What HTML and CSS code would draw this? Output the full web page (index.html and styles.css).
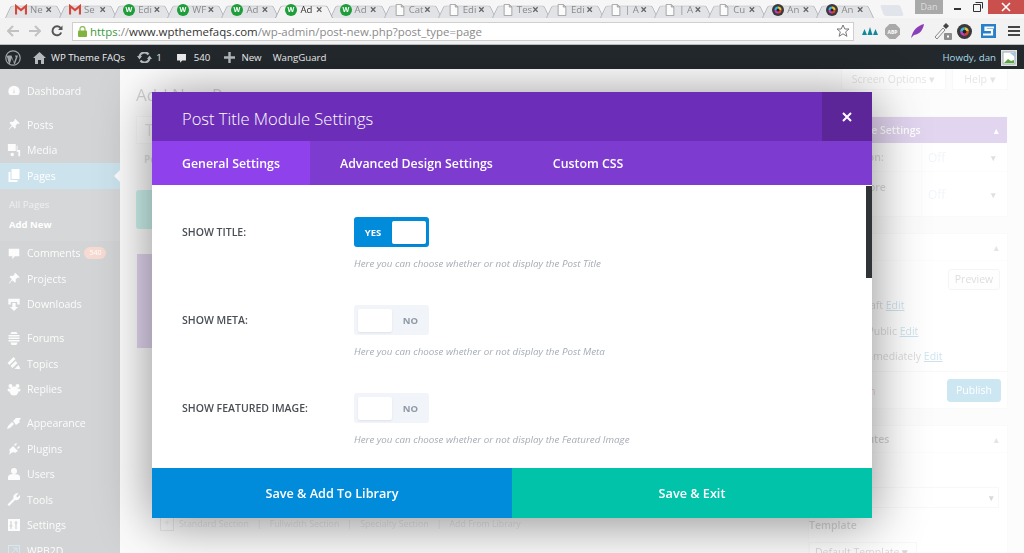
FILE: index.html
```html
<!DOCTYPE html>
<html lang="en">
<head>
<meta charset="utf-8">
<title>Add New Page</title>
<link rel="stylesheet" href="styles.css">
</head>
<body>
<svg class="defs" width="0" height="0" aria-hidden="true">
  <symbol id="gm" viewBox="0 0 12 12"><path d="M1 10.500V2l5 4 5-4v8.500" fill="none" stroke="#d5483b" stroke-width="2.200"/></symbol>
  <symbol id="wp" viewBox="0 0 12 12"><circle cx="6" cy="6" r="6" fill="#1e9e3a"/><text x="6" y="8" text-anchor="middle" class="wptxt">W</text></symbol>
  <symbol id="doc" viewBox="0 0 12 14"><path d="M1.500.5h6l3 3v10h-9z M7.500.5v3h3" fill="#fbfbfb" stroke="#9a9a9a"/></symbol>
  <symbol id="wheel" viewBox="0 0 12 12"><circle cx="6" cy="6" r="6" fill="#3a3a3e"/><path d="M6 2.500A3.500 3.500 0 0 1 9.500 6H6z" fill="#e9c23c"/><path d="M9.500 6A3.500 3.500 0 0 1 6 9.500V6z" fill="#d8452e"/><path d="M6 9.500A3.500 3.500 0 0 1 2.500 6H6z" fill="#c23cc0"/><path d="M2.500 6A3.500 3.500 0 0 1 6 2.500V6z" fill="#39b7d8"/><circle cx="6" cy="6" r="1.500" fill="#222"/></symbol>
  <symbol id="pin" viewBox="0 0 16 16"><path d="M9.500 1l5.500 5.500-1.500.8-1-.5-2.500 2.500.3 2.700-1.300 1.300-3-3L2 14.500l-.5-.5L5.300 9 2.500 6l1.300-1.300 2.700.3L9 2.500 8.600 1.600z" fill="#eee"/></symbol>
  <symbol id="bubble" viewBox="0 0 16 16"><path d="M1.500 2h13v9.500H9L6 15v-3.500H1.500z" fill="#eee"/></symbol>
</svg>

<div class="tabstrip">
  <div class="tab"><svg class="fav"><use href="#gm"/></svg><span class="tl">Ne</span><span class="tx">×</span></div>
  <div class="tab"><svg class="fav"><use href="#gm"/></svg><span class="tl">Se</span><span class="tx">×</span></div>
  <div class="tab"><svg class="fav"><use href="#wp"/></svg><span class="tl">Edi</span><span class="tx">×</span></div>
  <div class="tab"><svg class="fav"><use href="#wp"/></svg><span class="tl">WF</span><span class="tx">×</span></div>
  <div class="tab"><svg class="fav"><use href="#wp"/></svg><span class="tl">Ad</span><span class="tx">×</span></div>
  <div class="tab active"><svg class="fav"><use href="#wp"/></svg><span class="tl">Ad</span><span class="tx">×</span></div>
  <div class="tab"><svg class="fav"><use href="#wp"/></svg><span class="tl">Ad</span><span class="tx">×</span></div>
  <div class="tab"><svg class="fav"><use href="#doc"/></svg><span class="tl">Cat</span><span class="tx">×</span></div>
  <div class="tab"><svg class="fav"><use href="#doc"/></svg><span class="tl">Edi</span><span class="tx">×</span></div>
  <div class="tab"><svg class="fav"><use href="#doc"/></svg><span class="tl">Tes</span><span class="tx">×</span></div>
  <div class="tab"><svg class="fav"><use href="#doc"/></svg><span class="tl">Edi</span><span class="tx">×</span></div>
  <div class="tab"><svg class="fav"><use href="#doc"/></svg><span class="tl">| A</span><span class="tx">×</span></div>
  <div class="tab"><svg class="fav"><use href="#doc"/></svg><span class="tl">| A</span><span class="tx">×</span></div>
  <div class="tab"><svg class="fav"><use href="#doc"/></svg><span class="tl">Cu</span><span class="tx">×</span></div>
  <div class="tab"><svg class="fav"><use href="#wheel"/></svg><span class="tl">An</span><span class="tx">×</span></div>
  <div class="tab"><svg class="fav"><use href="#wheel"/></svg><span class="tl">An</span><span class="tx">×</span></div>
  <div class="newtab"></div>
  <div class="winbtns">
    <span class="profile">Dan</span>
    <span class="wb"><svg width="10" height="10" viewBox="0 0 10 10"><path d="M1 6h7v2H1z" fill="#333"/></svg></span>
    <span class="wb"><svg width="10" height="10" viewBox="0 0 10 10"><path d="M2.500.5h7v6M.5 2.500h7v7h-7z" fill="none" stroke="#333"/></svg></span>
    <span class="wb wclose"><svg width="10" height="10" viewBox="0 0 10 10"><path d="M1 1l8 8M9 1l-8 8" stroke="#fff" stroke-width="1.600"/></svg></span>
  </div>
</div>

<div class="toolbar">
  <svg class="navi" width="12" height="12" viewBox="0 0 12 12"><path d="M6 1L1 6l5 5M1 6h11" fill="none" stroke="#c2c2c2" stroke-width="2"/></svg>
  <svg class="navi" width="12" height="12" viewBox="0 0 12 12"><path d="M6 1l5 5-5 5M11 6H0" fill="none" stroke="#c2c2c2" stroke-width="2"/></svg>
  <svg class="navi" width="12" height="12" viewBox="0 0 12 12"><path d="M10.200 7.500A4.500 4.500 0 1 1 9.500 3" fill="none" stroke="#555" stroke-width="2"/><path d="M11.500 .5v4.500H7z" fill="#555"/></svg>
  <div class="omnibox">
    <svg class="lock" width="9" height="11" viewBox="0 0 9 11"><path d="M2 5V3a2.500 2.500 0 0 1 5 0v2" fill="none" stroke="#8fbf5a" stroke-width="1.300"/><rect y="4.500" width="9" height="6.500" rx="1" fill="#7fb53f"/></svg>
    <span class="url"><span class="u-g">https</span><span class="u-l">://</span><span class="u-d">www.wpthemefaqs.com</span><span class="u-l">/wp-admin/post-new.php?post_type=page</span></span>
    <svg class="star" width="14" height="14" viewBox="0 0 14 14"><path d="M7 1l1.800 4h4.200l-3.300 2.800 1.200 4.500L7 9.800l-3.900 2.500 1.200-4.500L1 5h4.200z" fill="#fff" stroke="#777"/></svg>
  </div>
  <div class="exts">
    <svg width="16" height="10" viewBox="0 0 16 10"><path d="M0 9l2.500-6L5 9zM5.500 9L8 1l2.500 8zM11 9l2.500-6L16 9z" fill="#12899a"/></svg>
    <svg width="15" height="15" viewBox="0 0 15 15"><path d="M4.500 0h6L15 4.500v6L10.500 15h-6L0 10.500v-6z" fill="#a9a9a9"/><text x="7.500" y="10" text-anchor="middle" class="abp">ABP</text></svg>
    <svg width="13" height="14" viewBox="0 0 13 14"><path d="M0 14C2 6 6 2 13 0c-1 6-4 10-10 11z" fill="#8a3fb8"/></svg>
    <svg width="18" height="18" viewBox="0 0 18 18"><path d="M1 15l8-9 2 2-8 9z" fill="#f4f4f4" stroke="#888"/><path d="M9 4l3-3 3 3-3 3z" fill="#444"/><rect x="10" y="11" width="8" height="7" rx="1" fill="#8d8d8d"/><rect x="13" y="13.500" width="2" height="2" fill="#fff"/></svg>
    <svg width="15" height="15"><use href="#wheel"/></svg>
    <svg width="15" height="14" viewBox="0 0 15 14"><rect width="15" height="14" fill="#2a80c8"/><path d="M13 3.500H4.500v2.500H11v4.500H2" fill="none" stroke="#fff" stroke-width="2.200"/></svg>
    <svg width="12" height="10" viewBox="0 0 12 10"><path d="M0 0h12v2H0zM0 4h12v2H0zM0 8h12v2H0z" fill="#444"/></svg>
  </div>
</div>

<header class="adminbar">
  <svg class="wplogo" width="16" height="16" viewBox="0 0 16 16"><circle cx="8" cy="8" r="7.200" fill="none" stroke="#a0a5aa" stroke-width="1.200"/><path d="M3 5.500h3.500L9 12.500l1.800-5L10 5.500h3L10 14h-.8L6.800 8l-2 6H4L1.800 6z" fill="#a0a5aa"/></svg>
  <svg class="abi" width="13" height="12" viewBox="0 0 13 12"><path d="M6.500 0L13 6h-2v6H8V8H5v4H2V6H0z" fill="#b4b9be"/></svg>
  <span class="abt sitename">WP Theme FAQs</span>
  <svg class="abi upd" width="15" height="11" viewBox="0 0 15 11"><path d="M2.500 5.500a5 5 0 0 1 9-3M12.500 5.500a5 5 0 0 1-9 3" fill="none" stroke="#b4b9be" stroke-width="2.200"/><path d="M0 4h5L2.500 7.500zM10 7h5l-2.500-3.500z" fill="#b4b9be"/></svg>
  <span class="abt one">1</span>
  <svg class="abi cmt" width="11" height="12"><use href="#bubble"/></svg>
  <span class="abt c540">540</span>
  <svg class="abi plus" width="11" height="11" viewBox="0 0 11 11"><path d="M4.300 0h2.400v4.300H11v2.400H6.700V11H4.300V6.700H0V4.300h4.300z" fill="#b4b9be"/></svg>
  <span class="abt new">New</span>
  <span class="abt wang">WangGuard</span>
  <span class="abt howdy">Howdy, dan</span>
  <svg class="avatar" width="16" height="16" viewBox="0 0 16 16"><rect width="16" height="16" fill="#dfe3e6"/><rect x="2" y="2" width="12" height="12" fill="#fff" stroke="#9aa"/><path d="M3 13l4-4 3 2 3-1v3z" fill="#5aa83c"/><path d="M9 3h5v4z" fill="#9cc7e6"/></svg>
</header>

<div class="workspace">
  <nav class="sidebar">
    <div class="mi"><svg width="13" height="13" viewBox="0 0 16 16"><path d="M8 2a7 7 0 0 0-7 7c0 2 .8 3.500 2 4.500h10c1.200-1 2-2.500 2-4.500a7 7 0 0 0-7-7zm-.8 9l.8-6 .8 6a1 1 0 0 1-1.600 0z" fill="#eee"/></svg><span>Dashboard</span></div>
    <div class="gap"></div>
    <div class="mi"><svg width="13" height="13"><use href="#pin"/></svg><span>Posts</span></div>
    <div class="mi"><svg width="14" height="14" viewBox="0 0 16 16"><path d="M1 1h9v8H1z M11 3h1v5h3v7h-2v-5h-2z" fill="#eee"/><circle cx="6" cy="13" r="2" fill="#eee"/></svg><span>Media</span></div>
    <div class="mi cur"><svg width="11" height="13" viewBox="0 0 11 13"><path d="M3 0h8v10H3z M0 3h2v8h7v2H0z" fill="#fff"/></svg><span>Pages</span></div>
    <div class="submenu">
      <div class="si">All Pages</div>
      <div class="si strong">Add New</div>
    </div>
    <div class="mi"><svg width="13" height="13"><use href="#bubble"/></svg><span>Comments</span><em class="badge">540</em></div>
    <div class="mi"><svg width="13" height="13"><use href="#pin"/></svg><span>Projects</span></div>
    <div class="mi"><svg width="13" height="13" viewBox="0 0 16 16"><path d="M1 1h14v7h-3V5H4v3H1z M6 6h4v5h3l-5 5-5-5h3z" fill="#eee"/></svg><span>Downloads</span></div>
    <div class="gap"></div>
    <div class="mi"><svg width="11" height="13" viewBox="0 0 11 13"><path d="M3 0h5l1 2H2zM0 3h11v1.500H0zM0 5.500h11V7H0zM0 8h11v1.500H0zM2 10.500h7L8 13H3z" fill="#eee"/></svg><span>Forums</span></div>
    <div class="mi"><svg width="13" height="13" viewBox="0 0 13 13"><path d="M0 6l6-6 2 2-6 6zM3 9l5-5 2 2-5 5zM7 12l4-4 2 4z" fill="#eee"/></svg><span>Topics</span></div>
    <div class="mi"><svg width="13" height="13" viewBox="0 0 13 13"><circle cx="6.500" cy="8" r="4.500" fill="#eee"/><circle cx="3" cy="3" r="2" fill="#eee"/><circle cx="10" cy="3" r="2" fill="#eee"/><circle cx="1.500" cy="7" r="1.500" fill="#eee"/><circle cx="11.500" cy="7" r="1.500" fill="#eee"/></svg><span>Replies</span></div>
    <div class="gap"></div>
    <div class="mi"><svg width="14" height="13" viewBox="0 0 14 13"><path d="M0 12l1-3 4-4 2 2-4 4zM6 4l3-3 5 0-2 3 1 1-4 3z" fill="#eee"/></svg><span>Appearance</span></div>
    <div class="mi"><svg width="12" height="12" viewBox="0 0 12 12"><path d="M1 12l1-4-1-1 3-3 1-1 5 5-3 2-1-1-3 1z M6 2l2-2 1 1-2 2zM9 5l2-2 1 1-2 2z" fill="#eee"/></svg><span>Plugins</span></div>
    <div class="mi"><svg width="12" height="12" viewBox="0 0 12 12"><circle cx="6" cy="3" r="3" fill="#eee"/><path d="M0 12V9c0-2 2-3 6-3s6 1 6 3v3z" fill="#eee"/></svg><span>Users</span></div>
    <div class="mi"><svg width="13" height="13" viewBox="0 0 13 13"><path d="M0 11.500L6 5.500a4 4 0 0 1 5-5L8.500 3 10 4.500 12.500 2a4 4 0 0 1-5 5L1.500 13z" fill="#eee"/></svg><span>Tools</span></div>
    <div class="mi"><svg width="12" height="12" viewBox="0 0 12 12"><path d="M0 0h12v12H0z" fill="#eee"/><path d="M3 2v8M8 2v8M1.500 7h3M6.500 4h3" stroke="#23282d" stroke-width="1.200"/></svg><span>Settings</span></div>
    <div class="mi"><svg width="12" height="12" viewBox="0 0 12 12"><rect x=".5" y=".5" width="11" height="11" fill="none" stroke="#3a8db5"/><path d="M3 9l5-5M5 3h4v4" fill="none" stroke="#3a8db5"/></svg><span>WPB2D</span></div>
  </nav>

  <main class="content">
    <div class="leftcol">
      <h1 class="pagetitle">Add New Page</h1>
      <div class="titleinput">Title</div>
      <div class="permalink">Permalink:</div>
      <div class="buildbtn">Use Default Editor</div>
      <div class="builderbox"></div>
      <div class="sections">
        <span class="plusbox">+</span>
        <span>Standard Section</span><i>|</i><span>Fullwidth Section</span><i>|</i><span>Specialty Section</span><i>|</i><span>Add From Library</span>
      </div>
    </div>
    <aside class="rightcol">
      <div class="screenmeta"><span class="smtab">Screen Options ▾</span><span class="smtab">Help ▾</span></div>
      <section class="box pagebox">
        <div class="boxhead purple"><span>Divi Page Settings</span><b>▴</b></div>
        <div class="setrow first"><span>Navigation:</span><span class="off">Off</span><b>▾</b></div>
        <div class="setrow second"><span>Hide Before<br>Scroll:</span><span class="off">Off</span><b>▾</b></div>
      </section>
      <section class="box pubbox">
        <div class="boxhead"><span>Publish</span><b>▴</b></div>
        <div class="prevrow"><span class="btn">Preview</span></div>
        <div class="pubrow">Status: Draft <a>Edit</a></div>
        <div class="pubrow">Visibility: Public <a>Edit</a></div>
        <div class="pubrow">Publish immediately <a>Edit</a></div>
        <div class="pubfoot"><span class="trash">Move to Trash</span><span class="btn primary">Publish</span></div>
      </section>
      <section class="box attrbox">
        <div class="boxhead"><span>Page Attributes</span><b>▴</b></div>
        <div class="selectwide"><b>▾</b></div>
        <div class="tpl">Template</div>
        <div class="selectsm">Default Template <b>▾</b></div>
      </section>
    </aside>
  </main>
</div>

<div class="overlay"></div>

<div class="modal">
  <div class="mhead">
    <h2>Post Title Module Settings</h2>
    <div class="mclose"><svg width="10" height="10" viewBox="0 0 10 10"><path d="M1 1l8 8M9 1l-8 8" stroke="#fff" stroke-width="2"/></svg></div>
  </div>
  <div class="mtabs">
    <div class="mtab on">General Settings</div>
    <div class="mtab">Advanced Design Settings</div>
    <div class="mtab">Custom CSS</div>
  </div>
  <div class="mbody">
    <div class="thumb"></div>
    <div class="opt">
      <label class="optlabel">Show Title:</label>
      <div class="optfield">
        <div class="toggle yes"><span class="tt">YES</span><span class="knob"></span></div>
        <p class="desc">Here you can choose whether or not display the Post Title</p>
      </div>
    </div>
    <div class="opt">
      <label class="optlabel">Show Meta:</label>
      <div class="optfield">
        <div class="toggle"><span class="knob"></span><span class="tt">NO</span></div>
        <p class="desc">Here you can choose whether or not display the Post Meta</p>
      </div>
    </div>
    <div class="opt">
      <label class="optlabel">Show Featured Image:</label>
      <div class="optfield">
        <div class="toggle"><span class="knob"></span><span class="tt">NO</span></div>
        <p class="desc">Here you can choose whether or not display the Featured Image</p>
      </div>
    </div>
  </div>
  <div class="mfoot">
    <div class="fbtn blue">Save &amp; Add To Library</div>
    <div class="fbtn green">Save &amp; Exit</div>
  </div>
</div>
</body>
</html>
```

FILE: styles.css
```css
* { box-sizing: border-box; }
html, body { margin: 0; height: 553px; overflow: hidden; }
body { font-family: "Open Sans", sans-serif; background: #f1f1f1; display: flex; flex-direction: column; position: relative; color: #444; filter: blur(.35px); }
.defs { position: absolute; }
.wptxt { font: 700 7px "Open Sans", sans-serif; fill: #fff; }
.abp { font: 700 5px "Open Sans", sans-serif; fill: #fff; }

/* browser tabs */
.tabstrip { flex: 0 0 18px; height: 18px; display: flex; background: #f6f6f6; padding-left: 5px; align-items: flex-end; position: relative; }
.tab { flex: 0 0 54.100px; height: 17px; display: flex; align-items: center; padding: 0 6px 0 10px; position: relative; font-size: 9.600px; color: #8a8a8a; }
.tab::before { content: ""; position: absolute; left: 0; right: -4px; top: 0; bottom: 0; background: #e1e3e6; border: 1px solid #b4b6b9; border-bottom: 0; border-radius: 3px 3px 0 0; transform: perspective(30px) rotateX(26deg); transform-origin: bottom; }
.tab.active { color: #333; z-index: 2; }
.tab.active::before { background: #f3f3f3; border-color: #a8a8a8; }
.fav { width: 12px; height: 12px; flex: none; position: relative; }
.tl { margin-left: 3px; white-space: nowrap; position: relative; flex: none; }
.tx { margin-left: auto; font-size: 12px; font-weight: 700; color: #666; position: relative; line-height: 1; margin-right: 1px; }
.newtab { width: 20px; height: 11px; margin: 0 0 2px 11px; background: #e1e4ea; border-radius: 2px; transform: skewX(20deg); }
.winbtns { margin-left: auto; height: 18px; display: flex; align-items: flex-start; }
.profile { width: 28px; height: 14px; background: #a9a9a9; color: #ddd; font-size: 9px; text-align: center; line-height: 14px; margin-right: 5px; }
.wb { width: 20px; height: 14px; display: flex; align-items: center; justify-content: center; }
.wclose { width: 36px; background: #c9504c; }

/* toolbar */
.toolbar { flex: 0 0 27px; height: 27px; background: #f2f2f2; display: flex; align-items: center; padding-left: 7px; border-bottom: 1px solid #bdbdbd; }
.navi { margin-right: 10px; flex: none; }
.omnibox { margin-left: -1px; width: 782px; height: 19px; background: #fff; border: 1px solid #cfcfcf; display: flex; align-items: center; padding: 0 3px 0 5px; }
.lock { flex: none; }
.url { margin-left: 3px; font-size: 11.450px; white-space: nowrap; }
.u-g { color: #3c9a3c; }
.u-l { color: #8a8a8a; }
.u-d { color: #333; }
.star { margin-left: auto; }
.exts { display: flex; align-items: center; flex: 1; padding-left: 8px; }
.exts svg { flex: none; }
.exts svg:nth-child(2) { margin-left: 7px; }
.exts svg:nth-child(3) { margin-left: 11px; }
.exts svg:nth-child(4) { margin-left: 10px; }
.exts svg:nth-child(5) { margin-left: 5px; }
.exts svg:nth-child(6) { margin-left: 9px; }
.exts svg:nth-child(7) { margin-left: 12px; }

/* admin bar */
.adminbar { flex: 0 0 24px; height: 24px; background: #23282d; display: flex; align-items: center; position: relative; z-index: 5; padding: 1px 0 0 5px; color: #eee; }
.abt { font-size: 9.700px; white-space: nowrap; }
.abi { flex: none; }
.wplogo { margin-right: 12px; flex: none; }
.sitename { margin-left: 5px; }
.upd { margin-left: 12px; }
.one { margin-left: 4px; }
.cmt { margin-left: 14px; }
.c540 { margin-left: 7px; }
.plus { margin-left: 14px; }
.new { margin-left: 6px; }
.wang { margin-left: 11px; }
.howdy { margin-left: auto; color: #a8dbe6; margin-right: 5px; }
.avatar { margin-right: 7px; flex: none; }

/* page beneath the modal */
.workspace { flex: 1; display: flex; min-height: 0; overflow: hidden; }
.sidebar { flex: 0 0 120px; background: #23282d; color: #eee; padding-top: 9px; font-size: 10.500px; overflow: hidden; }
.gap { height: 8.500px; }
.mi { height: 25.500px; display: flex; align-items: center; padding-left: 7px; position: relative; }
.mi svg { width: 14px; flex: none; }
.mi span { margin-left: 6px; }
.cur { background: #0073aa; color: #fff; }
.cur::after { content: ""; position: absolute; right: 0; top: 7px; border: 6px solid transparent; border-left-width: 0; border-right-color: #f1f1f1; }
.submenu { background: #32373c; padding: 6px 0 6px 9px; height: 52px; font-size: 9.800px; color: #b4b9be; }
.si { height: 20px; line-height: 20px; }
.strong { font-weight: 700; color: #fff; font-size: 9.500px; }
.badge { font-style: normal; font-size: 7px; background: #d54e21; color: #fff; border-radius: 8px; padding: 0 5px; line-height: 12px; margin-left: 4px; }

.content { flex: 1; display: flex; justify-content: space-between; padding-left: 16px; padding-right: 16px; min-width: 0; }
.leftcol { width: 656px; display: flex; flex-direction: column; font-size: 10px; }
.pagetitle { font-size: 17px; font-weight: 400; color: #23282d; margin: 14px 0 0; line-height: 24px; }
.titleinput { margin-top: 9px; height: 28px; background: #fff; border: 1px solid #ddd; font-size: 16px; padding-left: 8px; color: #777; line-height: 26px; }
.permalink { font-weight: 700; color: #666; margin: 8px 0 0 8px; line-height: 14px; }
.buildbtn { margin-top: 24px; height: 39px; background: #00bfa5; border-radius: 3px; width: 200px; color: #fff; line-height: 39px; padding-left: 16px; }
.builderbox { margin-top: 25px; height: 94px; background: #6d32ae; margin-left: 1px; }
.sections { margin-top: 169px; padding-left: 24px; display: flex; align-items: center; gap: 8px; color: #888; font-size: 8.800px; line-height: 14px; }
.sections i { font-style: normal; }
.plusbox { width: 14px; height: 14px; border: 1px solid #999; text-align: center; line-height: 11px; margin-right: -3px; }

.rightcol { width: 200px; display: flex; flex-direction: column; font-size: 10.500px; }
.screenmeta { height: 21px; display: flex; justify-content: flex-end; gap: 6px; }
.smtab { background: #fff; border: 1px solid #ddd; border-top: 0; color: #72777c; text-align: center; padding: 0 7px; line-height: 20px; font-size: 10.500px; }
.smtab:first-child { width: 105px; }
.smtab:last-child { width: 56px; }
.box { background: #fff; border: 1px solid #e5e5e5; }
.boxhead { height: 27px; display: flex; align-items: center; justify-content: space-between; padding: 0 8px 0 2px; font-size: 10.500px; font-weight: 600; border-bottom: 1px solid #eee; color: #23282d; }
.boxhead b { font-size: 9px; color: #72777c; }
.purple { height: 26px; background: #6e2db0; color: #fff; border: 0; padding-left: 22px; }
.purple b { color: #fff; }
.pagebox { margin-top: 26px; height: 101px; }
.setrow { display: grid; grid-template-columns: 95px 1fr 12px; align-items: center; padding: 0 4px 0 17px; color: #555; font-weight: 600; border-bottom: 1px solid #eee; }
.first { height: 29px; }
.second { height: 44px; border-bottom: 0; }
.off { align-self: stretch; display: flex; align-items: center; border-left: 1px solid #eee; font-size: 12px; color: #b8c8e0; font-weight: 400; padding-left: 6px; }
.setrow b { font-size: 9px; color: #666; }
.pubbox { margin-top: 16px; height: 176px; }
.prevrow { display: flex; justify-content: flex-end; padding: 8px 7px 0 0; height: 32px; }
.btn { height: 21px; line-height: 19px; width: 52px; border: 1px solid #ccc; border-radius: 3px; text-align: center; color: #555; background: #f7f7f7; }
.pubrow { height: 25.500px; line-height: 25.500px; padding-left: 13px; color: #444; white-space: nowrap; font-size: 10.500px; }
.pubrow a { color: #0073aa; text-decoration: underline; }
.pubfoot { display: flex; justify-content: space-between; align-items: center; margin-top: 1px; padding: 0 6px 0 0; border-top: 1px solid #ddd; height: 39px; }
.trash { color: #a00; font-size: 10px; }
.primary { background: #0085ba; color: #fff; border-color: #0085ba; height: 23px; line-height: 21px; width: 54px; }
.attrbox { margin-top: 16px; flex: 1; }
.selectwide { margin: 34px 8px 0 8px; height: 21px; border: 1px solid #ddd; display: flex; justify-content: flex-end; align-items: center; padding-right: 4px; font-size: 9px; }
.tpl { margin: 10px 0 0 0; font-weight: 600; color: #444; }
.selectsm { margin: 10px 0 0 0; width: 108px; height: 20px; border: 1px solid #ddd; padding-left: 5px; line-height: 18px; white-space: nowrap; }

/* overlay + modal */
.overlay { position: absolute; left: 0; right: 0; top: 69px; bottom: 0; background: rgba(255, 255, 255, .8); z-index: 6; }
.modal { position: absolute; left: 152px; top: 92px; width: 720px; height: 426px; z-index: 7; display: flex; flex-direction: column; background: #fff; box-shadow: 0 5px 50px rgba(0, 0, 0, .45); }
.mhead { flex: 0 0 49px; height: 49px; background: #6c2eb9; display: flex; justify-content: space-between; color: #fff; }
.mhead h2 { margin: 0; padding: 3px 0 0 30px; font-size: 16.500px; font-weight: 300; line-height: 47px; }
.mclose { width: 50px; background: #5c2699; display: flex; align-items: center; justify-content: center; }
.mtabs { flex: 0 0 44px; height: 44px; background: #7e3bd0; display: flex; color: #fff; font-size: 12.350px; font-weight: 600; line-height: 46px; }
.mtab { padding: 0 30px; }
.mtab.on { background: #8f42ec; }
.mbody { flex: 1; position: relative; padding: 32px 0 0 30px; overflow: hidden; font-size: 10px; }
.thumb { position: absolute; right: 0; top: 1px; width: 6px; height: 92px; background: #2f3336; }
.opt { display: flex; height: 88px; }
.optlabel { flex: 0 0 172px; text-transform: uppercase; font-weight: 600; font-size: 10.500px; color: #4a4f55; line-height: 30px; }
.optfield { flex: 1; }
.toggle { width: 75px; height: 30px; background: #f1f5f9; border-radius: 3px; display: flex; align-items: center; padding: 0 0 0 4px; font-weight: 700; font-size: 9.500px; color: #8e99a6; }
.toggle .tt { flex: 1; text-align: center; }
.knob { flex: 0 0 34px; height: 23px; background: #fff; border-radius: 2px; box-shadow: 0 1px 2px rgba(0, 0, 0, .08); }
.toggle.yes { background: #008bdb; color: #fff; padding: 0 3px 0 0; }
.desc { margin: 9px 0 0; font-style: italic; font-size: 9.800px; line-height: 16px; color: #a6acb5; }
.mfoot { flex: 0 0 50px; height: 50px; display: flex; }
.fbtn { flex: 1; text-align: center; color: #fff; font-size: 12.650px; font-weight: 600; padding-top: 1px; line-height: 49px; }
.blue { background: #008bdb; }
.green { background: #00c3aa; }
```
